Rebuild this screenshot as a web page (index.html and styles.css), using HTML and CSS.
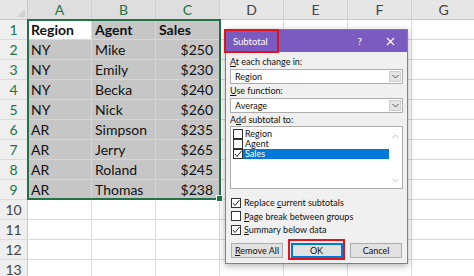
FILE: index.html
```html
<!DOCTYPE html>
<html lang="en">
<head>
    <meta charset="UTF-8">
    <title>Subtotal</title>
    <link rel="stylesheet" href="styles.css">
</head>
<body>
    <div class="sheet">
        <div class="grid">
            <div class="corner"></div>
            <div class="ch on">A</div><div class="ch on">B</div><div class="ch on">C</div>
            <div class="ch">D</div><div class="ch">E</div><div class="ch">F</div><div class="ch">G</div>

            <div class="rh on">1</div>
            <div class="cell bold">Region</div><div class="cell sel bold">Agent</div><div class="cell sel bold">Sales</div>
            <div class="cell"></div><div class="cell"></div><div class="cell"></div><div class="cell"></div>

            <div class="rh on">2</div>
            <div class="cell sel">NY</div><div class="cell sel">Mike</div><div class="cell sel num">$250</div>
            <div class="cell"></div><div class="cell"></div><div class="cell"></div><div class="cell"></div>

            <div class="rh on">3</div>
            <div class="cell sel">NY</div><div class="cell sel">Emily</div><div class="cell sel num">$230</div>
            <div class="cell"></div><div class="cell"></div><div class="cell"></div><div class="cell"></div>

            <div class="rh on">4</div>
            <div class="cell sel">NY</div><div class="cell sel">Becka</div><div class="cell sel num">$240</div>
            <div class="cell"></div><div class="cell"></div><div class="cell"></div><div class="cell"></div>

            <div class="rh on">5</div>
            <div class="cell sel">NY</div><div class="cell sel">Nick</div><div class="cell sel num">$260</div>
            <div class="cell"></div><div class="cell"></div><div class="cell"></div><div class="cell"></div>

            <div class="rh on">6</div>
            <div class="cell sel">AR</div><div class="cell sel">Simpson</div><div class="cell sel num">$235</div>
            <div class="cell"></div><div class="cell"></div><div class="cell"></div><div class="cell"></div>

            <div class="rh on">7</div>
            <div class="cell sel">AR</div><div class="cell sel">Jerry</div><div class="cell sel num">$265</div>
            <div class="cell"></div><div class="cell"></div><div class="cell"></div><div class="cell"></div>

            <div class="rh on">8</div>
            <div class="cell sel">AR</div><div class="cell sel">Roland</div><div class="cell sel num">$245</div>
            <div class="cell"></div><div class="cell"></div><div class="cell"></div><div class="cell"></div>

            <div class="rh on">9</div>
            <div class="cell sel">AR</div><div class="cell sel">Thomas</div><div class="cell sel num">$238</div>
            <div class="cell"></div><div class="cell"></div><div class="cell"></div><div class="cell"></div>

            <div class="rh">10</div>
            <div class="cell"></div><div class="cell"></div><div class="cell"></div>
            <div class="cell"></div><div class="cell"></div><div class="cell"></div><div class="cell"></div>

            <div class="rh">11</div>
            <div class="cell"></div><div class="cell"></div><div class="cell"></div>
            <div class="cell"></div><div class="cell"></div><div class="cell"></div><div class="cell"></div>

            <div class="rh">12</div>
            <div class="cell"></div><div class="cell"></div><div class="cell"></div>
            <div class="cell"></div><div class="cell"></div><div class="cell"></div><div class="cell"></div>

            <div class="rh">13</div>
            <div class="cell"></div><div class="cell"></div><div class="cell"></div>
            <div class="cell"></div><div class="cell"></div><div class="cell"></div><div class="cell"></div>
        </div>

        <!-- selection border over A1:C9 -->
        <div class="selection"><span class="handle"></span></div>

        <div class="dialog">
            <div class="titlebar">
                <span class="title">Subtotal</span>
                <span class="help">?</span>
                <svg class="close" width="9" height="9" viewBox="0 0 9 9">
                    <path d="M1 1 L8 8 M8 1 L1 8" stroke="#fff" stroke-width="1.2"/>
                </svg>
            </div>
            <div class="body">
                <div class="label label-first"><u>A</u>t each change in:</div>
                <div class="combo">
                    <span class="combo-text">Region</span>
                    <span class="combo-btn">
                        <svg width="7" height="5" viewBox="0 0 7 5"><path d="M0.5 1 L3.5 4 L6.5 1" fill="none" stroke="#555" stroke-width="1"/></svg>
                    </span>
                </div>
                <div class="label"><u>U</u>se function:</div>
                <div class="combo">
                    <span class="combo-text">Average</span>
                    <span class="combo-btn">
                        <svg width="7" height="5" viewBox="0 0 7 5"><path d="M0.5 1 L3.5 4 L6.5 1" fill="none" stroke="#555" stroke-width="1"/></svg>
                    </span>
                </div>
                <div class="label">A<u>d</u>d subtotal to:</div>
                <div class="listbox">
                    <div class="items">
                        <div class="item"><span class="box"></span><span class="item-text">Region</span></div>
                        <div class="item"><span class="box"></span><span class="item-text">Agent</span></div>
                        <div class="item">
                            <span class="box">
                                <svg width="8" height="8" viewBox="0 0 8 8"><path d="M1 4 L3 6.5 L7.5 1" fill="none" stroke="#222" stroke-width="1"/></svg>
                            </span>
                            <span class="item-text picked">Sales</span>
                        </div>
                    </div>
                    <div class="scroll">
                        <svg width="7" height="5" viewBox="0 0 7 5"><path d="M0.5 4 L3.5 1 L6.5 4" fill="none" stroke="#bbb" stroke-width="1"/></svg>
                        <svg width="7" height="5" viewBox="0 0 7 5"><path d="M0.5 1 L3.5 4 L6.5 1" fill="none" stroke="#bbb" stroke-width="1"/></svg>
                    </div>
                </div>
                <div class="options">
                    <div class="option">
                        <span class="box"><svg width="8" height="8" viewBox="0 0 8 8"><path d="M1 4 L3 6.5 L7.5 1" fill="none" stroke="#222" stroke-width="1"/></svg></span>
                        <span>Replace <u>c</u>urrent subtotals</span>
                    </div>
                    <div class="option">
                        <span class="box"></span>
                        <span><u>P</u>age break between groups</span>
                    </div>
                    <div class="option">
                        <span class="box"><svg width="8" height="8" viewBox="0 0 8 8"><path d="M1 4 L3 6.5 L7.5 1" fill="none" stroke="#222" stroke-width="1"/></svg></span>
                        <span><u>S</u>ummary below data</span>
                    </div>
                </div>
                <div class="buttons">
                    <button class="btn"><u>R</u>emove All</button>
                    <button class="btn btn-default">OK</button>
                    <button class="btn">Cancel</button>
                </div>
            </div>
        </div>

        <!-- red highlight marks -->
        <div class="mark mark-title"></div>
        <div class="mark mark-ok"></div>
    </div>
</body>
</html>
```

FILE: styles.css
```css
body {
    margin: 0;
    background-color: white;
    overflow: hidden;
}
.sheet {
    position: relative;
    width: 474px;
    height: 276px;
    overflow: hidden;
    font-family: Lato, "Open Sans", sans-serif;
}
.grid {
    display: grid;
    grid-template-columns: 28px repeat(7, 64px);
    grid-auto-rows: 20px;
}
.corner {
    position: relative;
    background-color: #e6e6e6;
    border-right: 1px solid #c8c8c8;
    border-bottom: 1px solid #c8c8c8;
    box-sizing: border-box;
}
.corner::after {
    content: "";
    position: absolute;
    right: 2px;
    bottom: 2px;
    border-left: 8px solid transparent;
    border-bottom: 8px solid #cfcfcf;
}
.ch {
    background-color: #e6e6e6;
    border-right: 1px solid #cfcfcf;
    border-bottom: 1px solid #c8c8c8;
    box-sizing: border-box;
    text-align: center;
    font-size: 14px;
    line-height: 20px;
    color: #444;
}
.ch.on {
    background-color: #dedede;
    color: #217346;
}
.rh {
    background-color: #efefef;
    border-right: 1px solid #c8c8c8;
    border-bottom: 1px solid #dadada;
    box-sizing: border-box;
    text-align: center;
    font-size: 14px;
    line-height: 19px;
    color: #444;
}
.rh.on {
    color: #217346;
}
.cell {
    border-right: 1px solid #dadada;
    border-bottom: 1px solid #dadada;
    box-sizing: border-box;
    padding-left: 3px;
    font-size: 14px;
    line-height: 20px;
    color: #111;
    white-space: nowrap;
    overflow: hidden;
}
.cell.sel {
    background-color: #c6c6c6;
    border-color: #d6d6d6;
}
.cell.bold {
    font-weight: bold;
}
.cell.num {
    text-align: right;
    padding-right: 6px;
}
.selection {
    position: absolute;
    left: 27px;
    top: 19px;
    width: 194px;
    height: 181px;
    border: 2px solid #217346;
    box-sizing: border-box;
}
.handle {
    position: absolute;
    right: -4px;
    bottom: -4px;
    width: 5px;
    height: 5px;
    background-color: #217346;
    border: 1px solid white;
}
.dialog {
    position: absolute;
    left: 225px;
    top: 29px;
    width: 183px;
    height: 235px;
    background-color: #f0f0f0;
    border: 1px solid #8a72c0;
    box-sizing: border-box;
    box-shadow: 0 2px 7px rgba(0, 0, 0, 0.3);
    font-family: Lato, "Open Sans", sans-serif;
    font-size: 9px;
    color: #111;
    display: flex;
    flex-direction: column;
}
.titlebar {
    height: 22px;
    background-color: #7b5bbf;
    display: flex;
    align-items: center;
    color: white;
    flex-shrink: 0;
}
.title {
    font-size: 9.5px;
    padding-left: 7px;
    flex: 1;
}
.help {
    font-size: 10px;
    margin-right: 24px;
}
.close {
    margin-right: 12px;
}
.body {
    padding: 0 4px 0 4px;
    display: flex;
    flex-direction: column;
}
.label {
    line-height: 12px;
    margin-top: 1px;
}
.label-first {
    margin-top: 4px;
}
.combo {
    height: 15px;
    margin-top: 1px;
    background-color: white;
    border: 1px solid #adadad;
    box-sizing: border-box;
    display: flex;
    align-items: center;
}
.combo-text {
    flex: 1;
    padding-left: 4px;
}
.combo-btn {
    width: 12px;
    height: 11px;
    margin-right: 1px;
    background-color: #e5e5e5;
    border: 1px solid #cdcdcd;
    box-sizing: border-box;
    display: flex;
    align-items: center;
    justify-content: center;
}
.listbox {
    height: 63px;
    margin-top: 0;
    background-color: white;
    border: 1px solid #adadad;
    box-sizing: border-box;
    display: flex;
}
.items {
    flex: 1;
    padding-top: 2px;
    padding-left: 2px;
}
.item {
    height: 10px;
    display: flex;
    align-items: center;
}
.item-text {
    flex: 1;
    line-height: 10px;
    padding-left: 2px;
}
.item-text.picked {
    background-color: #0078d7;
    color: white;
}
.box {
    width: 10px;
    height: 10px;
    border: 1px solid #333;
    background-color: white;
    box-sizing: border-box;
    display: flex;
    align-items: center;
    justify-content: center;
    flex-shrink: 0;
}
.box svg {
    display: block;
}
.scroll {
    width: 13px;
    display: flex;
    flex-direction: column;
    justify-content: space-between;
    align-items: center;
    padding: 7px 0 5px 0;
}
.options {
    margin-top: 7px;
}
.option {
    height: 13.5px;
    display: flex;
    align-items: center;
    gap: 3px;
    padding-left: 1px;
}
.buttons {
    display: flex;
    justify-content: space-between;
    margin-top: 6px;
    padding: 0 1px;
}
.btn {
    width: 52px;
    height: 15px;
    padding: 0;
    background-color: #e1e1e1;
    border: 1px solid #adadad;
    font-family: Lato, "Open Sans", sans-serif;
    font-size: 9px;
    color: #111;
}
.btn-default {
    border: 2px solid #0078d7;
}
.mark {
    position: absolute;
    border: 2px solid #e3131b;
    box-sizing: border-box;
}
.mark-title {
    left: 224px;
    top: 29px;
    width: 55px;
    height: 24px;
}
.mark-ok {
    left: 288px;
    top: 239px;
    width: 57px;
    height: 21px;
}
```
